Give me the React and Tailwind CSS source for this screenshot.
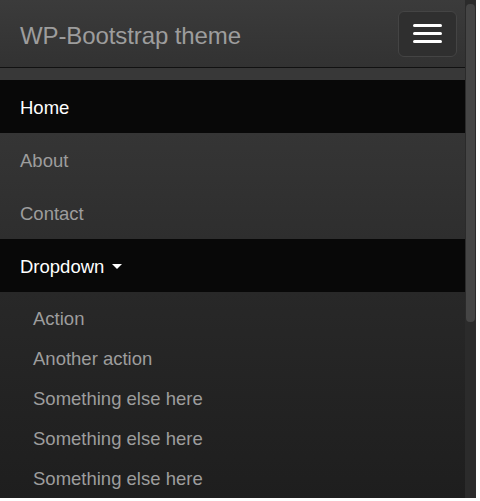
function Hamburger() {
  return (
    <button className="w-[59px] h-[46px] rounded-md border border-[#444] bg-[#2f2f2f] flex flex-col items-center justify-center gap-[5px]">
      <span className="block w-[29px] h-[3px] rounded-sm bg-white" />
      <span className="block w-[29px] h-[3px] rounded-sm bg-white" />
      <span className="block w-[29px] h-[3px] rounded-sm bg-white" />
    </button>
  );
}

function NavItem({ label, active, caret }) {
  return (
    <div
      className={
        "h-[53px] shrink-0 flex items-center px-5 pt-[2px] text-[18.5px] " +
        (active ? "bg-[#080808] text-white" : "text-[#9d9d9d]")
      }
    >
      {label}
      {caret && (
        <span className="ml-[8px] inline-block w-0 h-0 border-l-[5px] border-r-[5px] border-t-[5px] border-l-transparent border-r-transparent border-t-white" />
      )}
    </div>
  );
}

function MenuItem({ label }) {
  return (
    <div className="h-[40px] shrink-0 flex items-center pl-[33px] text-[18.5px] text-[#9d9d9d]">
      {label}
    </div>
  );
}

export default function App() {
  return (
    <div
      className="w-[476px] h-[498px] flex overflow-hidden bg-[#2a2a2a]"
      style={{ fontFamily: '"Liberation Sans", Arial, sans-serif' }}
    >
      <div className="flex-1 flex flex-col overflow-hidden">
        <div className="h-[68px] shrink-0 flex items-center justify-between pl-5 pr-[8px] bg-gradient-to-b from-[#3b3b3b] to-[#323232] border-b border-[#111]">
          <span className="pt-[4px] text-[24px] text-[#9d9d9d] tracking-[-0.1px]">WP-Bootstrap theme</span>
          <Hamburger />
        </div>
        <div className="h-[12px] shrink-0 bg-[#383838]" />
        <NavItem label="Home" active />
        <div className="shrink-0 bg-gradient-to-b from-[#353535] to-[#2e2e2e]">
          <NavItem label="About" />
          <NavItem label="Contact" />
        </div>
        <NavItem label="Dropdown" active caret />
        <div className="flex-1 min-h-0 overflow-hidden bg-gradient-to-b from-[#282828] to-[#1e1e1e] pt-[7px]">
          <MenuItem label="Action" />
          <MenuItem label="Another action" />
          <MenuItem label="Something else here" />
          <MenuItem label="Something else here" />
          <MenuItem label="Something else here" />
        </div>
      </div>
      <div className="w-[11px] shrink-0 bg-[#2b2b2b] flex flex-col pt-[4px]">
        <div className="mx-[1px] h-[318px] rounded-sm bg-[#454545]" />
      </div>
    </div>
  );
}
